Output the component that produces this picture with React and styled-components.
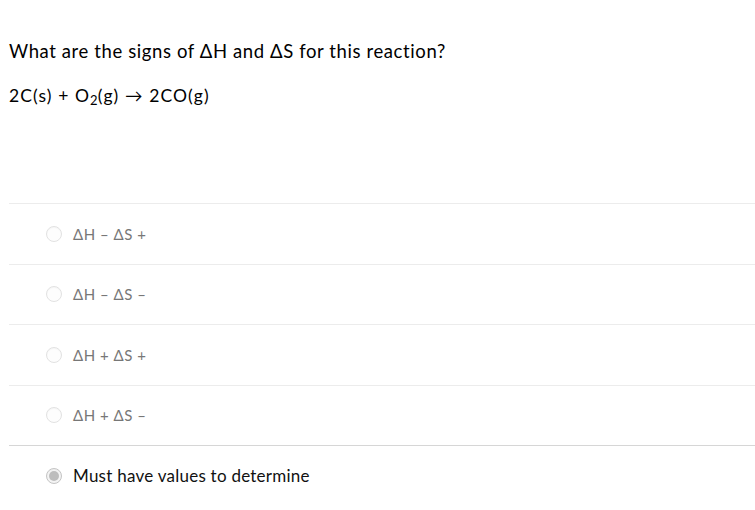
import React from "react";
import styled, { createGlobalStyle } from "styled-components";

const Global = createGlobalStyle`
  html, body { margin: 0; padding: 0; background: #fff; }
  body { font-family: Lato, "Noto Sans", sans-serif; color: #2d3b45; }
`;

const Page = styled.div`
  padding: 37px 0 0 9px;
  width: 746px;
`;

const Question = styled.div`
  font-size: 18.5px;
  letter-spacing: 0.6px;
  line-height: 28px;
  color: #000;
  margin: 0 0 19px 0;
`;

const Reaction = styled.div`
  font-size: 17.5px;
  letter-spacing: 1.1px;
  line-height: 24px;
  color: #000;
  margin-bottom: 95px;
  sub { font-size: 13px; vertical-align: -3px; line-height: 0; letter-spacing: 0; }
`;

const List = styled.div`
  display: flex;
  flex-direction: column;
`;

const Row = styled.label`
  box-sizing: border-box;
  display: flex;
  align-items: center;
  height: 60.5px;
  border-top: 1px solid ${(p) => (p.$strong ? "#d6d6d6" : "#ececec")};
  padding-left: 37px;
  gap: 11px;
  cursor: pointer;
`;

const Radio = styled.span`
  width: 14px;
  height: 14px;
  border-radius: 50%;
  border: 1px solid ${(p) => (p.$checked ? "#c4c4c4" : "#e2e2e2")};
  background: ${(p) => (p.$checked ? "#f4f4f4" : "#fdfdfd")};
  display: flex;
  align-items: center;
  justify-content: center;
  flex: none;
  box-shadow: inset 0 1px 1px rgba(0, 0, 0, 0.03);
  &::after {
    content: "";
    display: ${(p) => (p.$checked ? "block" : "none")};
    width: 10px;
    height: 10px;
    border-radius: 50%;
    background: #bdbdbd;
  }
`;

const Label = styled.span`
  font-size: ${(p) => (p.$checked ? "17px" : "15px")};
  letter-spacing: ${(p) => (p.$checked ? "0.25px" : "0.5px")};
  color: ${(p) => (p.$checked ? "#111" : "#777")};
  line-height: 20px;
`;

const answers = [
  { text: "ΔH – ΔS +" },
  { text: "ΔH – ΔS –" },
  { text: "ΔH + ΔS +" },
  { text: "ΔH + ΔS –" },
  { text: "Must have values to determine", checked: true },
];

export default function App() {
  return (
    <>
      <Global />
      <Page>
        <Question>What are the signs of ΔH and ΔS for this reaction?</Question>
        <Reaction>
          2C(s) + O<sub>2</sub>(g) → 2CO(g)
        </Reaction>
        <List>
          {answers.map((a, i) => (
            <Row key={i} $strong={a.checked}>
              <Radio $checked={a.checked} />
              <Label $checked={a.checked}>{a.text}</Label>
            </Row>
          ))}
        </List>
      </Page>
    </>
  );
}
